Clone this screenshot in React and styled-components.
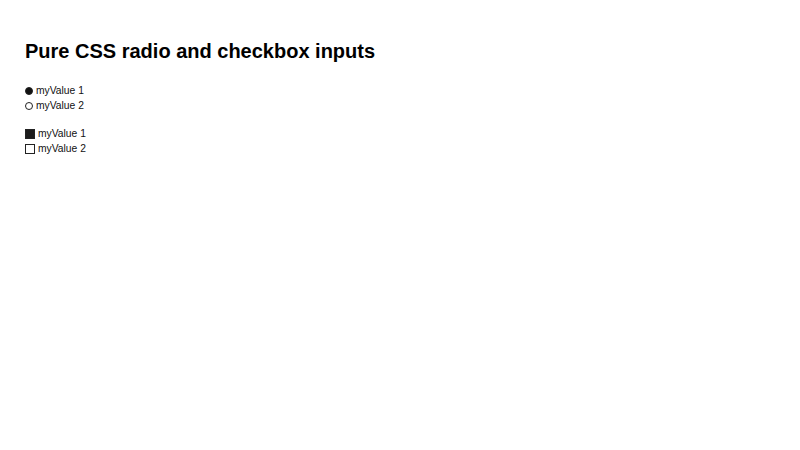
import React from "react";
import styled, { createGlobalStyle } from "styled-components";

const GlobalStyle = createGlobalStyle`
  body {
    margin: 0;
    background: #fff;
    font-family: "Liberation Sans", Arial, sans-serif;
    color: #111;
  }
`;

const Page = styled.main`
  padding: 40px 25px;
`;

const Title = styled.h1`
  margin: 0 0 20px;
  font-size: 20px;
  font-weight: 700;
  line-height: 23px;
  color: #000;
`;

const Group = styled.div`
  display: flex;
  flex-direction: column;
  margin-bottom: 13px;
`;

const Option = styled.label`
  display: flex;
  align-items: center;
  gap: 3px;
  height: 15px;
  font-size: 10.3px;
  color: #111;
`;

const Radio = styled.span`
  width: 8px;
  height: 8px;
  box-sizing: border-box;
  border-radius: 50%;
  border: 1px solid #222;
  background: ${({ $checked }) => ($checked ? "#111" : "#fff")};
`;

const Box = styled.span`
  width: 10px;
  height: 10px;
  box-sizing: border-box;
  border: 1px solid #222;
  background: ${({ $checked }) => ($checked ? "#1c1c1c" : "#fff")};
`;

const App = () => (
  <>
    <GlobalStyle />
    <Page>
      <Title>Pure CSS radio and checkbox inputs</Title>
      <Group>
        <Option>
          <Radio $checked />
          myValue 1
        </Option>
        <Option>
          <Radio />
          myValue 2
        </Option>
      </Group>
      <Group>
        <Option>
          <Box $checked />
          myValue 1
        </Option>
        <Option>
          <Box />
          myValue 2
        </Option>
      </Group>
    </Page>
  </>
);

export default App;
